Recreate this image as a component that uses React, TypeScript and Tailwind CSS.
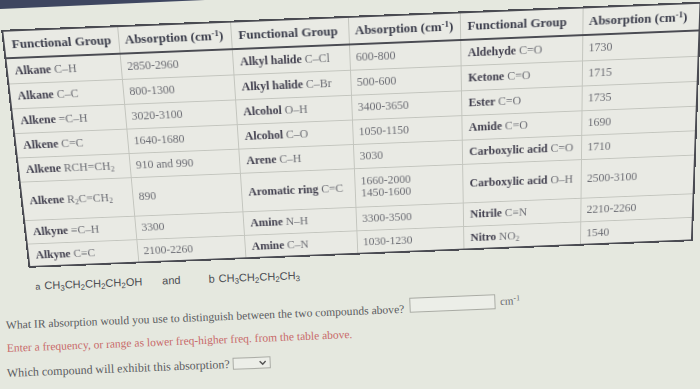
import React from "react";

type Row = {
  h: string;
  cells: { b: string; r: React.ReactNode; v: React.ReactNode }[];
};

const S = ({ t }: { t: string }) => <sub className="text-[8px]">{t}</sub>;

const rows: Row[] = [
  {
    h: "h-[26px]",
    cells: [
      { b: "Alkane", r: "C–H", v: "2850-2960" },
      { b: "Alkyl halide", r: "C–Cl", v: "600-800" },
      { b: "Aldehyde", r: "C=O", v: "1730" },
    ],
  },
  {
    h: "h-[26px]",
    cells: [
      { b: "Alkane", r: "C–C", v: "800-1300" },
      { b: "Alkyl halide", r: "C–Br", v: "500-600" },
      { b: "Ketone", r: "C=O", v: "1715" },
    ],
  },
  {
    h: "h-[26px]",
    cells: [
      { b: "Alkene", r: "=C–H", v: "3020-3100" },
      { b: "Alcohol", r: "O–H", v: "3400-3650" },
      { b: "Ester", r: "C=O", v: "1735" },
    ],
  },
  {
    h: "h-[26px]",
    cells: [
      { b: "Alkene", r: "C=C", v: "1640-1680" },
      { b: "Alcohol", r: "C–O", v: "1050-1150" },
      { b: "Amide", r: "C=O", v: "1690" },
    ],
  },
  {
    h: "h-[26px]",
    cells: [
      {
        b: "Alkene",
        r: (
          <>
            RCH=CH
            <S t="2" />
          </>
        ),
        v: "910 and 990",
      },
      { b: "Arene", r: "C–H", v: "3030" },
      { b: "Carboxylic acid", r: "C=O", v: "1710" },
    ],
  },
  {
    h: "h-[42px]",
    cells: [
      {
        b: "Alkene",
        r: (
          <>
            R<S t="2" />C=CH
            <S t="2" />
          </>
        ),
        v: "890",
      },
      {
        b: "Aromatic ring",
        r: "C=C",
        v: (
          <span className="block leading-[13px]">
            1660-2000
            <br />
            1450-1600
          </span>
        ),
      },
      { b: "Carboxylic acid", r: "O–H", v: "2500-3100" },
    ],
  },
  {
    h: "h-[26px]",
    cells: [
      { b: "Alkyne", r: "≡C–H", v: "3300" },
      { b: "Amine", r: "N–H", v: "3300-3500" },
      { b: "Nitrile", r: "C≡N", v: "2210-2260" },
    ],
  },
  {
    h: "h-[26px]",
    cells: [
      { b: "Alkyne", r: "C≡C", v: "2100-2260" },
      { b: "Amine", r: "C–N", v: "1030-1230" },
      {
        b: "Nitro",
        r: (
          <>
            NO
            <S t="2" />
          </>
        ),
        v: "1540",
      },
    ],
  },
];

const widths = ["w-[115px]", "w-[113px]", "w-[118px]", "w-[112px]", "w-[123px]", "w-[118px]"];

function Header() {
  const groups = [0, 1, 2];
  return (
    <tr className="h-[28px]">
      {groups.map((g) => (
        <React.Fragment key={g}>
          <th className="border border-[#c3c5be] border-b-2 border-b-[#4a4b52] px-[7px] text-left font-bold text-[13px] text-[#3b3d4b] whitespace-nowrap">
            Functional Group
          </th>
          <th className="border border-[#c3c5be] border-b-2 border-b-[#4a4b52] px-[6px] text-left font-bold text-[13px] text-[#3b3d4b] whitespace-nowrap">
            Absorption (cm<sup className="text-[9px]">-1</sup>)
          </th>
        </React.Fragment>
      ))}
    </tr>
  );
}

export default function App() {
  return (
    <div className="w-[700px] h-[389px] overflow-hidden relative bg-[#e5e8df] font-['Liberation_Serif',serif]">
      <div className="h-[389px] origin-center [transform:rotate(-2.3deg)] pt-[16px]">
        <div className="ml-[8px] origin-top [transform:perspective(600px)_rotateX(-7.4deg)]">
          <table className="border-collapse table-fixed w-[699px] border-2 border-[#4a4b52] bg-[#e9eae4]">
            <colgroup>
              {widths.map((w, i) => (
                <col key={i} className={w} />
              ))}
            </colgroup>
            <thead>
              <Header />
            </thead>
            <tbody>
              {rows.map((row, i) => (
                <tr key={i} className={row.h}>
                  {row.cells.map((c, j) => (
                    <React.Fragment key={j}>
                      <td className="border border-[#c3c5be] px-[7px] text-[12px] whitespace-nowrap">
                        <span className="font-bold text-[#42404f]">{c.b}</span>{" "}
                        <span className="text-[#6c6d74]">{c.r}</span>
                      </td>
                      <td className="border border-[#c3c5be] px-[6px] text-[12px] text-[#6c6d74] whitespace-nowrap">
                        {c.v}
                      </td>
                    </React.Fragment>
                  ))}
                </tr>
              ))}
            </tbody>
          </table>
        </div>

        <div className="-mt-[4px] ml-[32px] h-[14px] flex items-center font-['Liberation_Sans',sans-serif] text-[11px] text-[#4b4d52]">
          <span>
            <span className="text-[9px] mr-[4px]">a</span>CH<S t="3" />CH<S t="2" />CH<S t="2" />CH<S t="2" />OH
          </span>
          <span className="ml-[20px]">and</span>
          <span className="ml-[28px]">
            <span className="mr-[4px]">b</span>CH<S t="3" />CH<S t="2" />CH<S t="2" />CH<S t="3" />
          </span>
        </div>

        <div className="mt-[24px] ml-[1px] h-[16px] flex items-center text-[11.6px] text-[#5a5b60]">
          <span>What IR absorption would you use to distinguish between the two compounds above?</span>
          <span className="ml-[5px] mb-[10px] inline-block w-[86px] h-[15px] border border-[#a9aba4] bg-[#eceee8]" />
          <span className="ml-[5px] mb-[10px] text-[11px] text-[#6a6b70]">
            cm<sup className="text-[8px]">-1</sup>
          </span>
        </div>

        <div className="mt-[9px] ml-[1px] h-[12px] flex items-center text-[11.5px] text-[#c86a6a]">
          Enter a frequency, or range as lower freq-higher freq. from the table above.
        </div>

        <div className="mt-[11px] ml-[0px] h-[14px] flex items-center text-[12px] text-[#5a5b60]">
          <span>Which compound will exhibit this absorption?</span>
          <span className="ml-[3px] inline-flex items-center justify-end w-[38px] h-[12px] border border-[#a9aba4] bg-[#eceee8] pr-[3px]">
            <svg width="8" height="6" viewBox="0 0 8 6">
              <path d="M1 1.5 L4 4.5 L7 1.5" fill="none" stroke="#555" strokeWidth="1.4" />
            </svg>
          </span>
        </div>
      </div>

      <svg className="absolute left-0 top-0" width="220" height="12">
        <polygon points="0,0 205,0 0,9" fill="#3e4660" />
      </svg>
    </div>
  );
}
